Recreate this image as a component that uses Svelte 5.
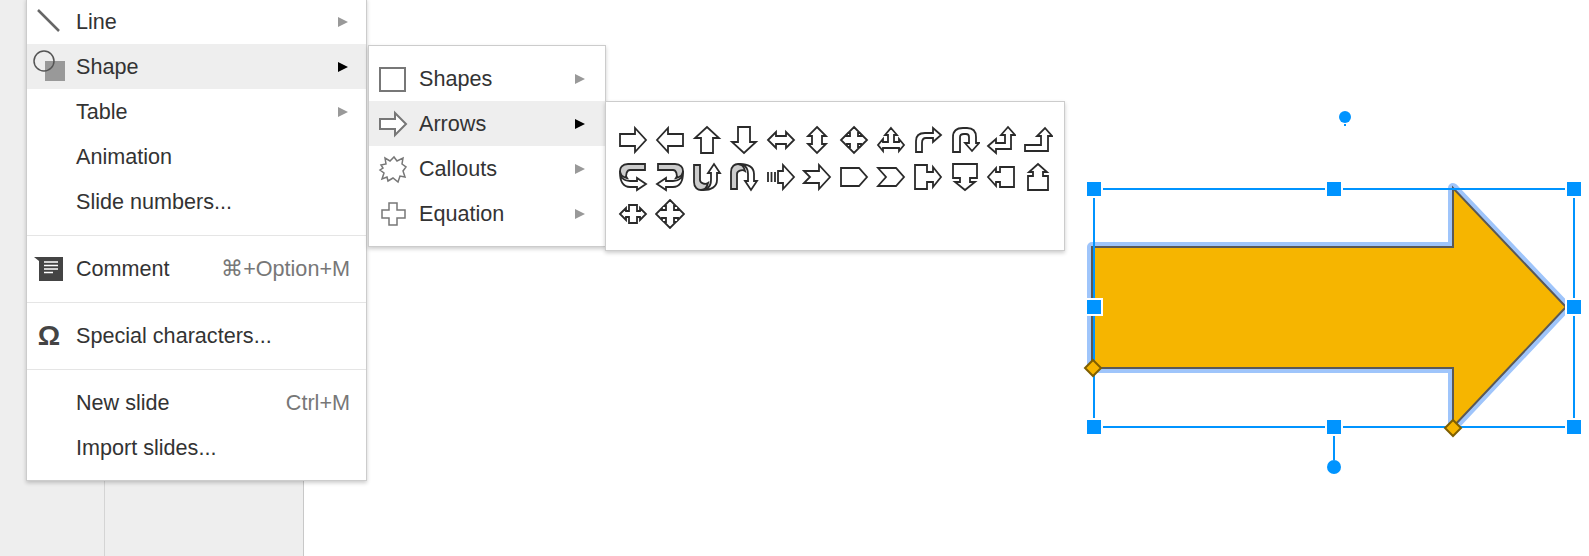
<script>
  const curve = [
    { d: 'M27 2H10C4 2 2 6 2 9C2 12 4 15 9 16C7 13 9 8 12 8H27Z', fill: '#ccc' },
    { d: 'M2 9C2 15 5 19 12 19H19V16L28 22 19 28V25H12C5 25 2 19 2 11Z' }
  ];

  // every entry is one tile of the arrows palette, drawn in a 30x30 box
  const arrows = [
    { paths: [{ d: 'M2 9H17V3L28 15 17 27V21H2Z' }] },
    { paths: [{ d: 'M28 9H13V3L2 15 13 27V21H28Z' }] },
    { paths: [{ d: 'M9 28V13H3L15 2 27 13H21V28Z' }] },
    { paths: [{ d: 'M9 2V17H3L15 28 27 17H21V2Z' }] },
    { paths: [{ d: 'M2 15 10 7V11H20V7L28 15 20 23V19H10V23Z' }] },
    { paths: [{ d: 'M15 2 24 11H20V19H24L15 28 6 19H10V11H6Z' }] },
    { paths: [{ d: 'M15 2 21 8H19V11H22V9L28 15 22 21V19H19V22H21L15 28 9 22H11V19H8V21L2 15 8 9V11H11V8H9Z' }] },
    { paths: [{ d: 'M15 3 21 10H18V17H23V14L28 20 23 26V23H7V26L2 20 7 14V17H12V10H9Z' }] },
    { paths: [{ d: 'M3 27V16Q3 8 12 8H20V3L28 10 20 17V13H13Q9 13 9 18V27Z' }] },
    { paths: [{ d: 'M3 27V12Q3 3 13 3H17Q26 3 26 12V18H29L22 26 15 18H19V12Q19 9 16 9H14Q10 9 10 12V27Z' }] },
    { paths: [{ d: 'M2 21 10 14V18H19V10H15L22 2 29 10H25V24H10V28Z' }] },
    { paths: [{ d: 'M2 26V20H18V11H14L22 3 29 11H25V26Z' }] },
    { paths: curve },
    { paths: curve, tf: 'translate(30 0) scale(-1 1)' },
    { paths: curve, tf: 'rotate(-90 15 15)' },
    { paths: curve, tf: 'translate(0 30) scale(1 -1) rotate(-90 15 15)' },
    { paths: [{ d: 'M2 10V20M5.5 10V20M9 10V20M12 9H17V3L28 15 17 27V21H12Z' }] },
    { paths: [{ d: 'M2 9H17V3L28 15 17 27V21H2L8 15Z' }] },
    { paths: [{ d: 'M2 6H20L28 15 20 24H2Z' }] },
    { paths: [{ d: 'M2 6H20L28 15 20 24H2L10 15Z' }] },
    { paths: [{ d: 'M2 3H14V10H20V5L28 15 20 25V20H14V27H2Z' }] },
    { paths: [{ d: 'M3 2H27V16H20V20H25L15 28 5 20H10V16H3Z' }] },
    { paths: [{ d: 'M28 5V25H14V20H10V24L2 15 10 6V10H14V5Z' }] },
    { paths: [{ d: 'M5 28V14H10V10H6L15 2 24 10H20V14H25V28Z' }] },
    { paths: [{ d: 'M2 15 8 9V12H11V6H19V12H22V9L28 15 22 21V18H19V24H11V18H8V21Z' }] },
    { paths: [{ d: 'M15 1 21 7H19V11H23V9L29 15 23 21V19H19V23H21L15 29 9 23H11V19H7V21L1 15 7 9V11H11V7H9Z' }] }
  ];

  const handles = [
    [1094, 189], [1334, 189], [1574, 189],
    [1094, 307], [1574, 307],
    [1094, 427], [1334, 427], [1574, 427]
  ];
</script>

<div class="page">
  <aside class="strip">
    <div class="strip-left"></div>
  </aside>

  <main class="canvas">
    <svg width="1285" height="556" viewBox="304 0 1285 556">
      <path class="halo" d="M1092 247H1453V188L1566 307 1453 427V368H1092Z" />
      <path class="body" d="M1092 247H1453V188L1566 307 1453 427V368H1092Z" />
      <rect class="frame" x="1094" y="189" width="480" height="238" />
      <line class="frame" x1="1334" y1="427" x2="1334" y2="460" />
      <circle class="knob" cx="1334" cy="467" r="7" />
      <circle class="knob" cx="1345" cy="117" r="6" />
      <rect class="knob" x="1344" y="124" width="2" height="2" />
      {#each handles as [x, y]}
        <rect class="handle" x={x - 8} y={y - 8} width="16" height="16" />
      {/each}
      <path class="diamond" d="M1093 360 1101 368 1093 376 1085 368Z" />
      <path class="diamond" d="M1453 420 1461 428 1453 436 1445 428Z" />
    </svg>
  </main>

  <div class="menu main-menu">
    <div class="item">
      <span class="ico"><svg width="30" height="30" viewBox="0 0 30 30"><path d="M4 3 25 24" stroke="#666" stroke-width="2.5" /></svg></span>
      <span class="label">Line</span><span class="tri"></span>
    </div>
    <div class="item on">
      <span class="ico">
        <svg width="34" height="34" viewBox="0 0 34 34">
          <rect x="13" y="11" width="20" height="20" fill="#999" />
          <circle cx="12" cy="11" r="10" fill="none" stroke="#555" stroke-width="1.5" />
        </svg>
      </span>
      <span class="label">Shape</span><span class="tri"></span>
    </div>
    <div class="item"><span class="ico"></span><span class="label">Table</span><span class="tri"></span></div>
    <div class="item"><span class="ico"></span><span class="label">Animation</span></div>
    <div class="item"><span class="ico"></span><span class="label">Slide numbers...</span></div>
    <div class="sep"></div>
    <div class="item">
      <span class="ico">
        <svg width="30" height="24" viewBox="0 0 30 24">
          <path d="M0 0H29V24H5V4Z" fill="#444" />
          <path d="M10 5H24M10 8.5H24M10 12H24M10 15.5H19" stroke="#fff" stroke-width="1.5" />
        </svg>
      </span>
      <span class="label">Comment</span><span class="keys">⌘+Option+M</span>
    </div>
    <div class="sep"></div>
    <div class="item"><span class="ico omega">Ω</span><span class="label">Special characters...</span></div>
    <div class="sep"></div>
    <div class="item"><span class="ico"></span><span class="label">New slide</span><span class="keys">Ctrl+M</span></div>
    <div class="item"><span class="ico"></span><span class="label">Import slides...</span></div>
  </div>

  <div class="menu sub-menu">
    <div class="item">
      <span class="ico"><svg class="out" width="30" height="30" viewBox="0 0 30 30"><rect x="2" y="4" width="25" height="23" /></svg></span>
      <span class="label">Shapes</span><span class="tri"></span>
    </div>
    <div class="item on">
      <span class="ico"><svg class="out" width="30" height="30" viewBox="0 0 30 30"><path d="M2 10H17V4L28 15 17 26V20H2Z" /></svg></span>
      <span class="label">Arrows</span><span class="tri"></span>
    </div>
    <div class="item">
      <span class="ico"><svg class="out thin" width="30" height="30" viewBox="0 0 30 30"><polygon points="3,11 8,10 7,4 12,7 16,3 19,7 25,4 24,10 28,13 25,17 27,23 22,22 20,28 15,24 10,27 9,23 4,25 6,19 2,16 5,14" /></svg></span>
      <span class="label">Callouts</span><span class="tri"></span>
    </div>
    <div class="item">
      <span class="ico"><svg class="out thin" width="30" height="30" viewBox="0 0 30 30"><path d="M11 4H19V11H27V19H19V26H11V19H4V11H11Z" /></svg></span>
      <span class="label">Equation</span><span class="tri"></span>
    </div>
  </div>

  <div class="menu palette">
    {#each arrows as arrow}
      <div class="tile">
        <svg width="30" height="30" viewBox="0 0 30 30">
          <g transform={arrow.tf}>
            {#each arrow.paths as p}
              <path d={p.d} fill={p.fill ?? '#fff'} />
            {/each}
          </g>
        </svg>
      </div>
    {/each}
  </div>
</div>

<style>
  :global(body) {
    margin: 0;
    background: #fff;
  }

  .page {
    position: relative;
    display: flex;
    width: 1589px;
    height: 556px;
    overflow: hidden;
    font-family: "Liberation Sans", Arial, sans-serif;
    color: #333;
  }

  .strip {
    flex: none;
    width: 303px;
    background: #eee;
    border-right: 1px solid #c8c8c8;
  }

  .strip-left {
    width: 104px;
    height: 100%;
    border-right: 1px solid #d4d4d4;
  }

  .canvas {
    flex: 1;
  }

  .canvas svg {
    display: block;
  }

  .halo {
    fill: none;
    stroke: #9fc5fb;
    stroke-width: 10;
    stroke-linejoin: round;
  }

  .body {
    fill: #f6b500;
    stroke: #595959;
    stroke-width: 2;
  }

  .frame {
    fill: none;
    stroke: #0094ff;
    stroke-width: 2;
  }

  .knob {
    fill: #0094ff;
  }

  .handle {
    fill: #0094ff;
    stroke: #fff;
    stroke-width: 2;
  }

  .diamond {
    fill: #f6b500;
    stroke: #7f5f00;
    stroke-width: 2;
  }

  .menu {
    position: absolute;
    box-sizing: border-box;
    background: #fff;
    border: 1px solid #ccc;
    box-shadow: 0 2px 4px rgba(0, 0, 0, 0.2);
  }

  .main-menu {
    left: 26px;
    top: -2px;
    width: 341px;
    padding-bottom: 10px;
  }

  .sub-menu {
    left: 368px;
    top: 45px;
    width: 238px;
    padding: 10px 0;
  }

  .palette {
    left: 605px;
    top: 101px;
    width: 460px;
    height: 150px;
    padding: 19px 0 0 9px;
    display: grid;
    grid-template-columns: repeat(12, 36.8px);
    grid-auto-rows: 37px;
  }

  .item {
    display: flex;
    align-items: center;
    height: 45px;
    padding-right: 18px;
    font-size: 21.6px;
  }

  .sub-menu .item {
    padding-right: 20px;
  }

  .on {
    background: #eee;
  }

  .ico {
    flex: none;
    width: 44px;
    margin-right: 5px;
    display: flex;
    align-items: center;
    justify-content: center;
  }

  .sub-menu .ico {
    width: 48px;
    margin-right: 2px;
  }

  .omega {
    font-size: 28px;
    font-weight: bold;
    line-height: 30px;
    color: #444;
  }

  .label {
    flex: 1;
    padding-top: 1px;
  }

  .keys {
    margin-right: -2px;
    padding-top: 1px;
    color: #777;
  }

  .tri {
    width: 0;
    height: 0;
    border-left: 10px solid #999;
    border-top: 5.5px solid transparent;
    border-bottom: 5.5px solid transparent;
  }

  .on .tri {
    border-left-color: #000;
  }

  .sep {
    height: 1px;
    margin: 11px 0 10px;
    background: #e5e5e5;
  }

  .out {
    fill: #fff;
    stroke: #777;
    stroke-width: 2;
  }

  .thin {
    stroke-width: 1.5;
  }

  .tile {
    display: flex;
    align-items: center;
    justify-content: center;
  }

  .tile path {
    stroke: #2a2a2a;
    stroke-width: 1.8;
    stroke-linejoin: miter;
  }
</style>
